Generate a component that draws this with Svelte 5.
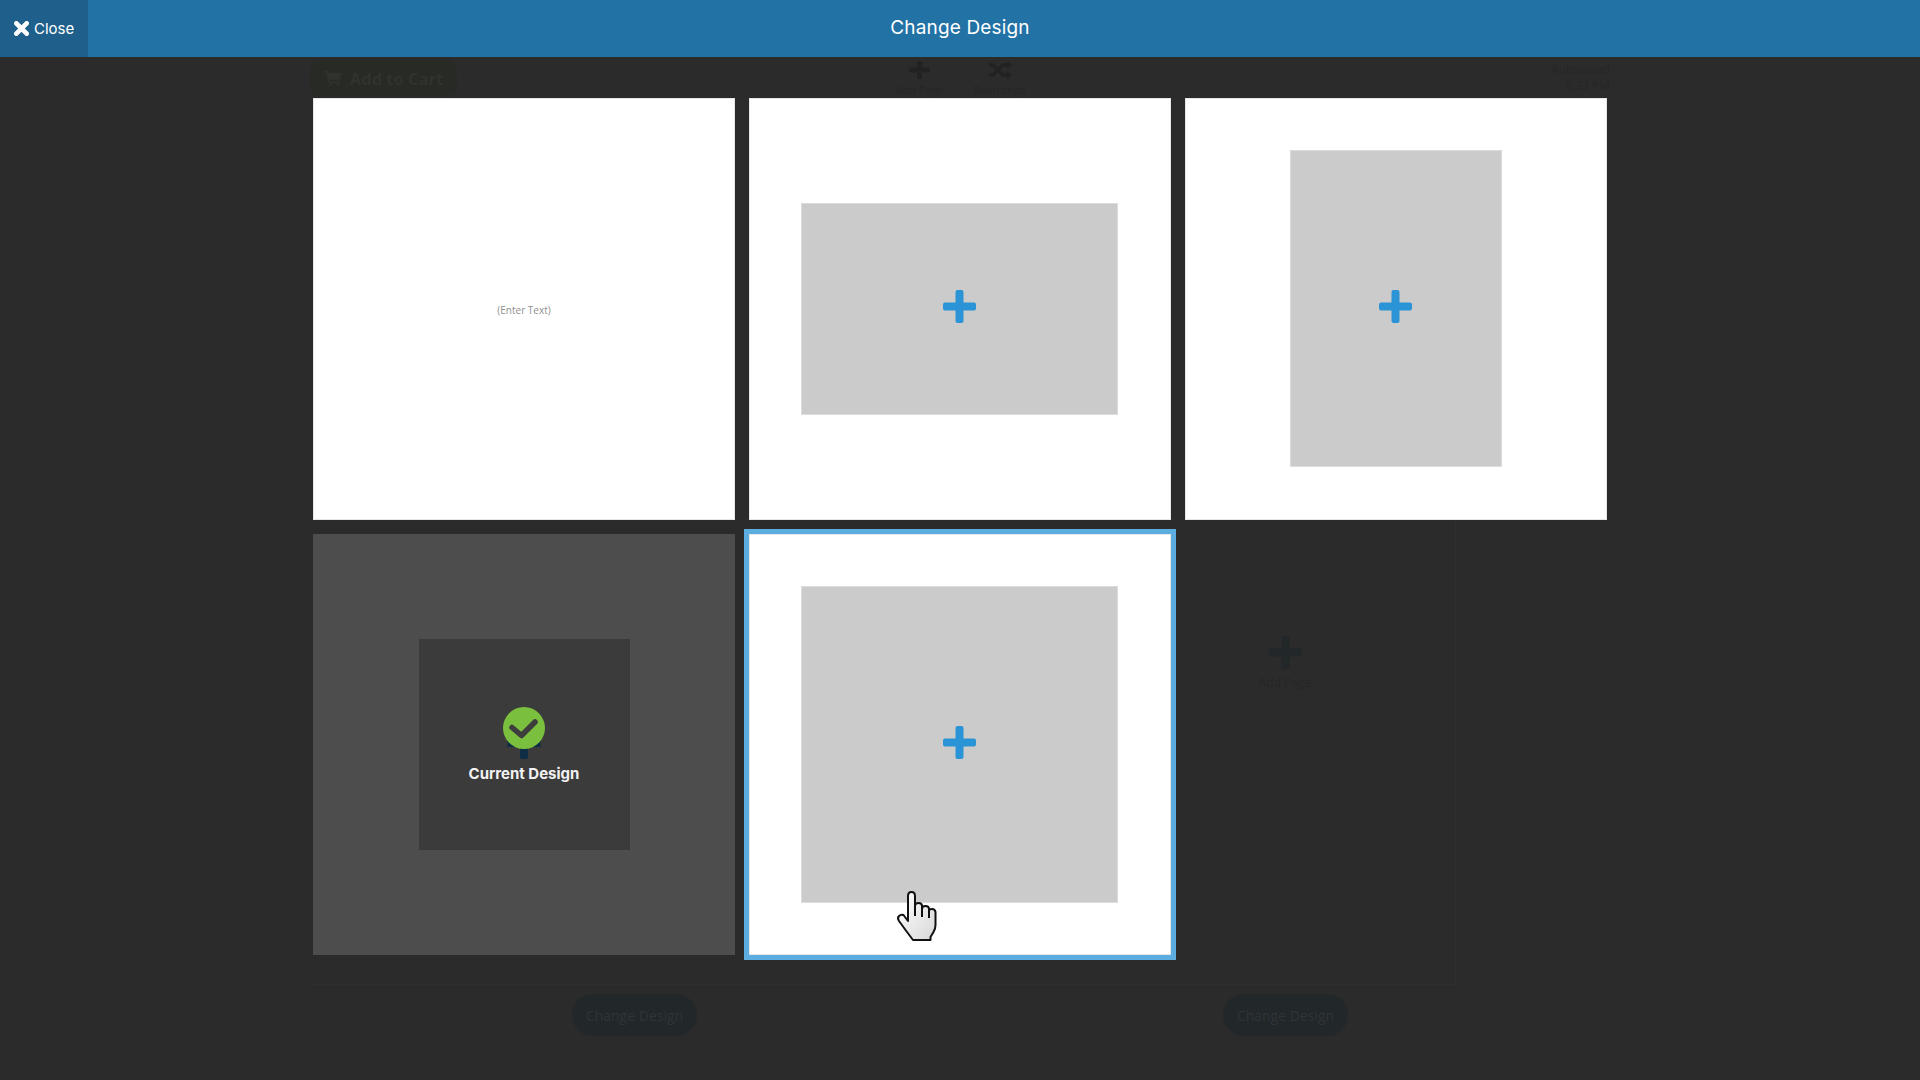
<script>
  const designs = [
    { kind: 'text' },
    { kind: 'photo', w: 317, h: 212 },
    { kind: 'photo', w: 212, h: 317 },
    { kind: 'current' },
    { kind: 'photo', w: 317, h: 317, selected: true }
  ];
</script>

<div class="app">
  <!-- dimmed editor behind the modal -->
  <div class="behind">
    <div class="toolbar">
      <div class="cart-btn">
        <svg class="cart" viewBox="0 0 20 18"><path d="M0 1h4l1 2h15l-2 8H6l.5 2H18v2H5L2.5 3H0z" /><circle cx="7" cy="16.5" r="1.5" /><circle cx="16" cy="16.5" r="1.5" /></svg>
        Add to Cart
      </div>
      <div class="tools">
        <div class="tool">
          <svg viewBox="0 0 33 18"><path class="ghost-plus" d="M14 0h5v6.500h8v5h-8V18h-5v-6.500H6v-5h8z" /></svg>
          <span>Add Page</span>
        </div>
        <div class="tool">
          <svg viewBox="0 0 33 18">
            <path class="ghost-shuffle" d="M6 4h4l10 10h5M6 14h4l10-10h5" />
            <path class="ghost-plus" d="M24 0l5 4-5 4zM24 10l5 4-5 4z" />
          </svg>
          <span>Rearrange</span>
        </div>
      </div>
      <div class="autosaved">Autosaved<br />9:33 PM</div>
    </div>
    <div class="spread">
      <div class="add-page">
        <svg viewBox="0 0 33 33"><path d="M12.500 2q0-2 2-2h4q2 0 2 2v10.500h10.500q2 0 2 2v4q0 2-2 2H20.500v10.500q0 2-2 2h-4q-2 0-2-2V20.500H2q-2 0-2-2v-4q0-2 2-2h10.500z" /></svg>
        <span>Add Page</span>
      </div>
    </div>
    <div class="footer">
      <div class="pill">Change Design</div>
      <div class="pill">Change Design</div>
    </div>
  </div>

  <header class="bar">
    <button class="close">
      <svg viewBox="0 0 16 16"><path d="M2.500 2.500l11 11M13.500 2.500l-11 11" /></svg>
      Close
    </button>
    <h1>Change Design</h1>
  </header>

  <main class="grid">
    {#each designs as d}
      <div class="card" class:selected={d.selected} class:current={d.kind === 'current'}>
        {#if d.kind === 'text'}
          <span class="enter">(Enter Text)</span>
        {:else if d.kind === 'photo'}
          <div class="photo" style="width:{d.w}px;height:{d.h}px">
            <svg class="plus" viewBox="0 0 33 33"><path d="M12.500 2q0-2 2-2h4q2 0 2 2v10.500h10.500q2 0 2 2v4q0 2-2 2H20.500v10.500q0 2-2 2h-4q-2 0-2-2V20.500H2q-2 0-2-2v-4q0-2 2-2h10.500z" /></svg>
          </div>
        {:else}
          <div class="current-box">
            <svg class="check" viewBox="0 0 50 57">
              <path class="under" d="M8.500 32h33v8H29v10q0 2-2 2h-4q-2 0-2-2V40H8.500z" />
              <circle cx="25" cy="21" r="21" />
              <path class="tick" d="M13 20.500l9.500 8L36 15" />
            </svg>
            <span>Current Design</span>
          </div>
        {/if}
        {#if d.selected}
          <svg class="hand" viewBox="0 0 60 80">
            <defs>
              <linearGradient id="hg" x1="0" y1="0" x2="1" y2="1">
                <stop offset="0" stop-color="#ffffff" />
                <stop offset="1" stop-color="#d8d8d8" />
              </linearGradient>
            </defs>
            <path class="palm" d="M28 51V26q0-4 3.500-4t3.500 4v10q0-3 3.500-3t3.500 3v3q0-3 3.500-3t3.500 3v2q0-2 3-2t3.500 3v13q0 4-2 7l-3 5v3H33l-6-8-8-11q-2-3 0-5t4.500-1z" />
            <path class="gap" d="M35 36v10M42 39v8M49 41v7" />
          </svg>
        {/if}
      </div>
    {/each}
  </main>
</div>

<style>
  :global(body) {
    margin: 0;
    background: #2b2b2b;
  }

  .app {
    position: relative;
    width: 1920px;
    height: 1080px;
    overflow: hidden;
    background: #2b2b2b;
    font-family: 'Open Sans', 'Liberation Sans', sans-serif;
  }

  .bar {
    position: relative;
    height: 57px;
    display: flex;
    align-items: center;
    justify-content: center;
    padding-bottom: 2px;
    box-sizing: border-box;
    background: #2272a6;
  }

  .bar h1 {
    margin: 0;
    font-family: Inter, 'Open Sans', sans-serif;
    font-size: 19px;
    font-weight: 400;
    letter-spacing: 0.15px;
    color: #fff;
  }

  .close {
    position: absolute;
    left: 0;
    top: 0;
    width: 88px;
    height: 57px;
    display: flex;
    align-items: center;
    gap: 5px;
    padding: 0 0 0 14px;
    border: none;
    background: #1f5f8b;
    color: #fff;
    font-family: Inter, 'Open Sans', sans-serif;
    font-size: 15px;
  }

  .close svg {
    width: 15px;
    height: 15px;
    fill: none;
    stroke: #fff;
    stroke-width: 5;
    stroke-linecap: round;
  }

  .grid {
    position: relative;
    width: 1294px;
    margin: 41px auto 0;
    display: grid;
    grid-template-columns: repeat(3, 422px);
    grid-auto-rows: 421.5px;
    gap: 14px;
  }

  .card {
    position: relative;
    display: flex;
    align-items: center;
    justify-content: center;
    background: #fff;
    box-shadow: inset 0 0 0 1px #e6e6e6;
  }

  .card.selected {
    outline: 5px solid #5cade0;
  }

  .card.current {
    background: #4d4d4d;
    box-shadow: none;
  }

  .enter {
    font-size: 10px;
    color: #8f8f8f;
    margin-top: 2px;
  }

  .photo {
    display: flex;
    align-items: center;
    justify-content: center;
    margin-left: -1px;
    background: #cbcbcb;
    box-shadow: inset 0 0 0 1px #dcdcdc;
  }

  .plus {
    width: 33px;
    height: 33px;
    margin-top: -4px;
    fill: #2b94d6;
  }

  .current-box {
    width: 211px;
    height: 211px;
    display: flex;
    flex-direction: column;
    align-items: center;
    justify-content: flex-start;
    padding-top: 68px;
    box-sizing: border-box;
    background: #3b3b3b;
    color: #f2f2f2;
    font-family: Inter, 'Open Sans', sans-serif;
    font-size: 15px;
    font-weight: 700;
  }

  .check {
    width: 50px;
    height: 57px;
    flex: none;
  }

  .check circle {
    fill: #7bbf3f;
  }

  .check .under {
    fill: #0f2e45;
  }

  .check .tick {
    fill: none;
    stroke: #3d3d3d;
    stroke-width: 5.500;
    stroke-linecap: round;
    stroke-linejoin: round;
  }

  .hand {
    position: absolute;
    left: 131px;
    top: 336px;
    width: 60px;
    height: 80px;
  }

  .palm {
    fill: url(#hg);
    stroke: #111;
    stroke-width: 2;
    stroke-linejoin: round;
  }

  .gap {
    fill: none;
    stroke: #111;
    stroke-width: 2;
  }

  /* everything below sits under the modal, nearly invisible */
  .behind {
    position: absolute;
    inset: 58px 0 0 0;
    color: #262626;
    font-size: 11px;
  }

  .toolbar {
    width: 1300px;
    margin-left: 310px;
    height: 40px;
    display: grid;
    grid-template-columns: 147px 1fr 60px;
    align-items: center;
  }

  .cart-btn {
    height: 38px;
    display: flex;
    align-items: center;
    justify-content: center;
    gap: 8px;
    border-radius: 12px;
    background: #272a25;
    color: #2f332c;
    font-size: 16.500px;
    font-weight: 700;
  }

  .cart {
    width: 18px;
    height: 16px;
    fill: #2f332c;
  }

  .tools {
    display: flex;
    justify-content: center;
    gap: 26px;
    margin: 2px 88px 0 0;
  }

  .tool {
    display: flex;
    flex-direction: column;
    align-items: center;
    gap: 3px;
    width: 54px;
    white-space: nowrap;
  }

  .tool svg {
    width: 33px;
    height: 18px;
  }

  .ghost-plus {
    fill: #222;
  }

  .ghost-shuffle {
    fill: none;
    stroke: #222;
    stroke-width: 3.500;
  }

  .autosaved {
    text-align: right;
    font-size: 12px;
    line-height: 16px;
    white-space: nowrap;
  }

  .spread {
    width: 1146px;
    height: 887px;
    margin-left: 310px;
    box-sizing: border-box;
    border-bottom: 1px solid #2f2f2f;
    border-right: 1px solid #2f2f2f;
    display: flex;
    justify-content: flex-end;
    padding: 538px 133px 0 0;
  }

  .add-page {
    display: flex;
    flex-direction: column;
    align-items: center;
    gap: 5px;
    width: 74px;
    white-space: nowrap;
    font-size: 12px;
  }

  .add-page svg {
    width: 33px;
    height: 33px;
    fill: #22272a;
  }

  .footer {
    display: flex;
    gap: 526px;
    margin: 9px 0 0 572px;
  }

  .pill {
    width: 125px;
    height: 42px;
    display: flex;
    align-items: center;
    justify-content: center;
    border-radius: 21px;
    background: #22272a;
    color: #2f3437;
    font-size: 14px;
  }
</style>
